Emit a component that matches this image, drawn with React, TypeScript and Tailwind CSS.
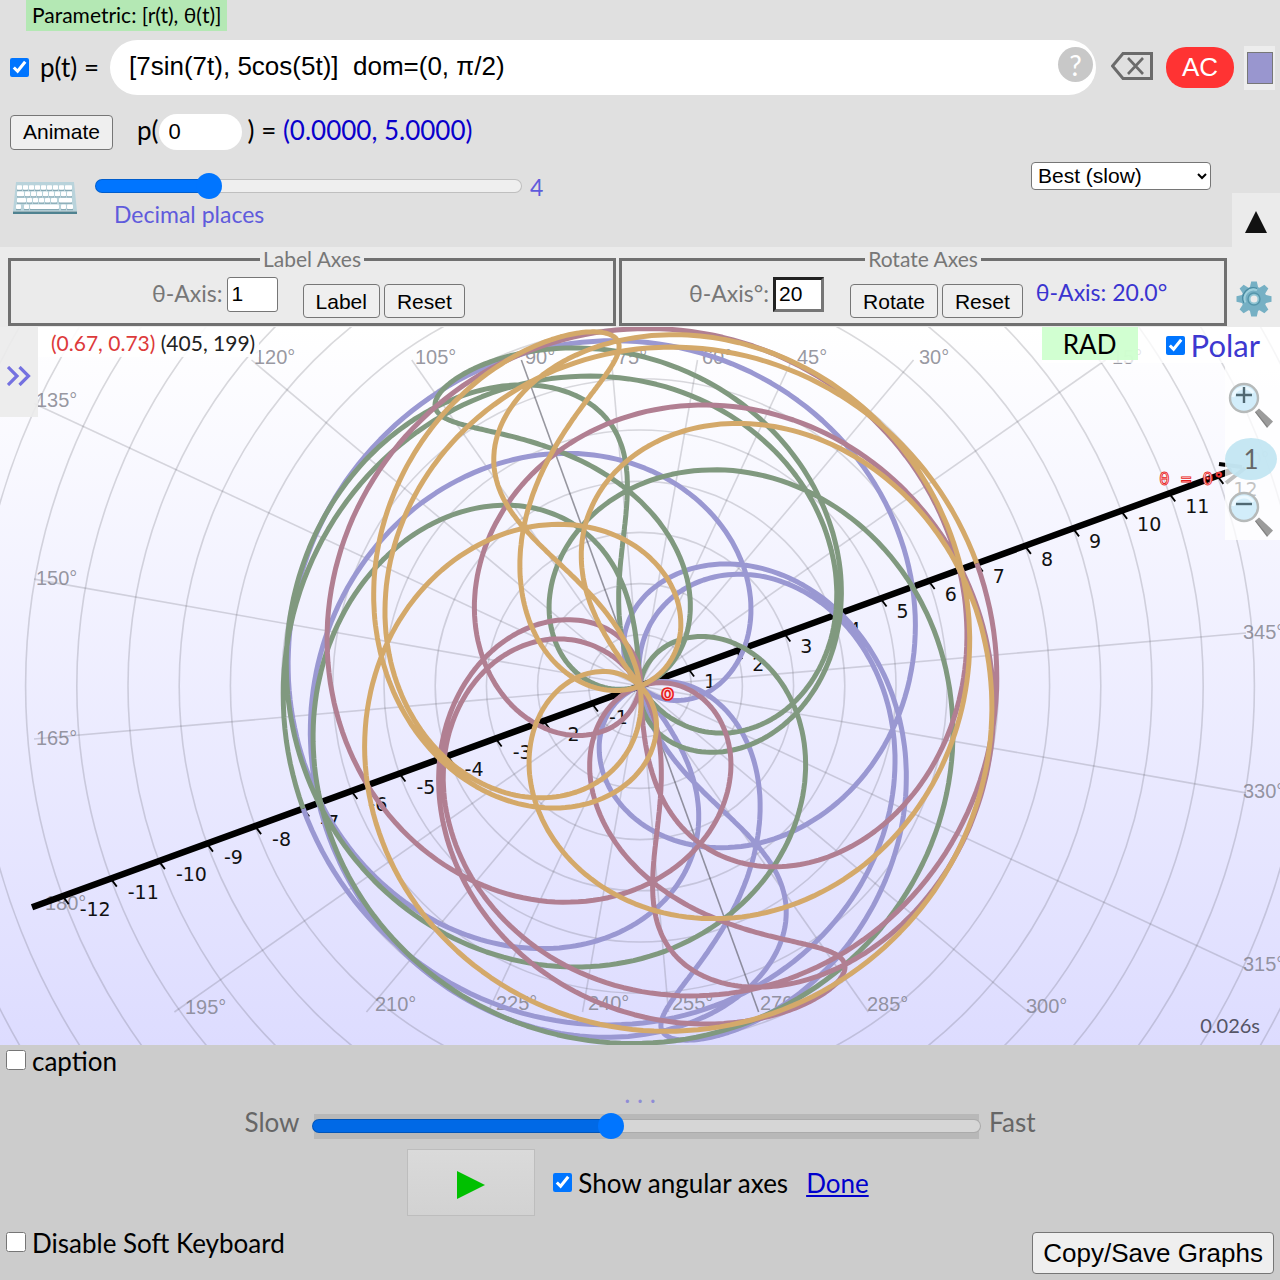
import { useState } from "react";
import type { ReactNode } from "react";
import clsx from "clsx";

const CX = 640;
const CY = 359;
const UNIT = 51.2;
const ROTATION = (20 * Math.PI) / 180;

const CURVES = [
  { color: "#9a98d2", start: 0 },
  { color: "#80997f", start: Math.PI / 2 },
  { color: "#b17f92", start: Math.PI },
  { color: "#d4a96a", start: (3 * Math.PI) / 2 },
];

const RINGS = Array.from({ length: 15 }, (_, i) => i + 1);
const TICKS = Array.from({ length: 25 }, (_, i) => i - 12).filter((n) => n !== 0);

// label text and its left/baseline position on the plot
const ANGLES: [string, number, number][] = [
  ["15°", 1112, 37],
  ["30°", 919, 37],
  ["45°", 797, 37],
  ["60°", 702, 37],
  ["75°", 617, 37],
  ["90°", 525, 37],
  ["105°", 415, 37],
  ["120°", 254, 37],
  ["135°", 36, 80],
  ["150°", 36, 258],
  ["165°", 36, 418],
  ["180°", 45, 583],
  ["195°", 185, 687],
  ["210°", 375, 684],
  ["225°", 496, 683],
  ["240°", 588, 683],
  ["255°", 672, 683],
  ["270°", 760, 683],
  ["285°", 867, 684],
  ["300°", 1026, 686],
  ["315°", 1243, 644],
  ["330°", 1243, 471],
  ["345°", 1243, 312],
  ["0°", 1250, 139],
];

function curvePath(start: number) {
  const steps = 1200;
  let d = "";
  for (let i = 0; i <= steps; i++) {
    const t = start + (i / steps) * (Math.PI / 2);
    const r = 7 * Math.sin(7 * t) * UNIT;
    const a = 5 * Math.cos(5 * t) + ROTATION;
    const x = CX + r * Math.cos(a);
    const y = CY - r * Math.sin(a);
    d += `${i ? "L" : "M"}${x.toFixed(1)} ${y.toFixed(1)}`;
  }
  return d;
}

// end of a ray, clipped to the labelled area
function rayEnd(deg: number) {
  const a = (deg * Math.PI) / 180 + ROTATION;
  const dx = Math.cos(a);
  const dy = -Math.sin(a);
  const t = Math.min(606 / Math.abs(dx), 326 / Math.abs(dy));
  return { x: CX + dx * t, y: CY + dy * t };
}

function Plot() {
  const cos = Math.cos(ROTATION);
  const sin = Math.sin(ROTATION);
  return (
    <svg viewBox="0 0 1280 718" className="block w-full" role="img" aria-label="Polar graph">
      <defs>
        <linearGradient id="sky" x1="0" y1="0" x2="0" y2="1">
          <stop offset="0" stopColor="#ffffff" />
          <stop offset="1" stopColor="#dddcff" />
        </linearGradient>
      </defs>
      <rect width="1280" height="718" fill="url(#sky)" />
      <g fill="none" stroke="#55555f" strokeOpacity="0.22" strokeWidth="1.6">
        {RINGS.map((n) => (
          <circle key={n} cx={CX} cy={CY} r={n * UNIT} />
        ))}
        {Array.from({ length: 24 }, (_, i) => i * 15)
          .filter((deg) => deg % 180 !== 0)
          .map((deg) => {
            const end = rayEnd(deg);
            return (
              <line
                key={deg}
                x1={CX}
                y1={CY}
                x2={end.x}
                y2={end.y}
                strokeOpacity={deg % 90 === 0 ? 0.6 : 0.22}
              />
            );
          })}
      </g>
      <g fill="#7d7d88" fillOpacity="0.8" fontSize="20" className="font-['Liberation_Sans',sans-serif]">
        {ANGLES.map(([text, x, y]) => (
          <text key={text} x={x} y={y}>
            {text}
          </text>
        ))}
      </g>
      <g stroke="#000">
        <line x1={CX - 647 * cos} y1={CY + 647 * sin} x2={CX + 630 * cos} y2={CY - 630 * sin} strokeWidth="6.5" />
        <path d="M1219 137L1242 140M1226 156L1245 141" strokeWidth="4" fill="none" />
        {TICKS.map((n) => {
          const x = CX + n * UNIT * cos;
          const y = CY - n * UNIT * sin;
          return <line key={n} x1={x} y1={y} x2={x + 6} y2={y + 8} strokeWidth="1.8" />;
        })}
      </g>
      <g fontSize="19" fill="#111" className="font-['DejaVu_Sans',sans-serif]">
        {TICKS.map((n) => (
          <text key={n} x={CX + n * UNIT * cos + (n < 0 ? 17 : 16)} y={CY - n * UNIT * sin + 20}>
            {n}
          </text>
        ))}
      </g>
      <g fill="none" strokeWidth="5" strokeLinejoin="round">
        {CURVES.map((c) => (
          <path key={c.color} d={curvePath(c.start)} stroke={c.color} />
        ))}
      </g>
      <g
        fill="#ffd0d0"
        stroke="#e81c1c"
        strokeWidth="0.8"
        fontSize="18"
        className="font-['DejaVu_Sans_Mono',monospace]"
      >
        <text x="1159" y="158">
          θ = 0°
        </text>
        <text x="661" y="373" fontSize="22" strokeWidth="1.6" fontWeight="700">
          o
        </text>
      </g>
    </svg>
  );
}

// x and width of every key, row by row
const KEYS: [number, number][][] = [
  [[4, 5], [10, 5], [16, 5], [22, 5], [28, 5], [34, 5], [40, 5], [46, 5], [52, 7]],
  [[4, 7], [12, 5], [18, 5], [24, 5], [30, 5], [36, 5], [42, 5], [48, 5], [54, 5]],
  [[4, 9], [14, 5], [20, 5], [26, 5], [32, 5], [38, 6], [46, 13]],
  [[3, 5], [11, 5], [17, 29], [48, 5], [54, 6]],
];

function KeyboardIcon() {
  return (
    <svg viewBox="0 0 64 32" className="h-8 w-16">
      <path d="M3 0h58l3 29H0z" fill="#b9d3db" />
      <path d="M0 29.500h64v2.500H0z" fill="#4f8290" />
      {KEYS.map((row, i) =>
        row.map(([x, w]) => (
          <g key={`${i}-${x}`}>
            <rect x={x} y={4 + i * 6.4} width={w} height="5" fill="#86a9b4" />
            <rect x={x} y={3.2 + i * 6.4} width={w} height="4.6" rx="0.8" fill="#fff" />
          </g>
        ))
      )}
    </svg>
  );
}

function GearIcon() {
  return (
    <svg viewBox="-18 -18 36 36" className="size-9">
      <g fill="#76b0c4">
        {[0, 45, 90, 135, 180, 225, 270, 315].map((deg) => (
          <path key={deg} d="M-4.500 -10L-2.800 -17.500H2.800L4.500 -10z" transform={`rotate(${deg})`} />
        ))}
        <circle r="12.500" />
      </g>
      <path d="M-10 4A10.500 10.500 0 0 1 3 -10.500" fill="none" stroke="#4a8ba2" strokeWidth="1.500" />
      <path d="M-8.500 3.500A9 9 0 0 1 3 -8.800" fill="none" stroke="#9fd0dd" strokeWidth="2" />
      <circle r="6" fill="#8fc4d3" stroke="#5596ab" strokeWidth="1.500" />
      <circle r="3.500" fill="#ebebeb" />
    </svg>
  );
}

function ZoomIcon({ plus }: { plus?: boolean }) {
  return (
    <svg viewBox="0 0 48 48" className="size-12">
      <path d="M30 31L34 27.500L48 40.500L42 47z" fill="#9b9b9b" />
      <path d="M30.500 31L42.500 46" stroke="#808080" strokeWidth="1.200" />
      <circle cx="19" cy="17" r="14" fill="#d2edfa" stroke="#b6baba" strokeWidth="2.400" />
      <path d="M8 16a11 11 0 0 1 20 -4" fill="none" stroke="#edf9ff" strokeWidth="3" />
      <path d={plus ? "M11 14H27M19 6V22" : "M11 14H27"} stroke="#4f6872" strokeWidth="2.400" />
    </svg>
  );
}

function BackspaceIcon() {
  return (
    <svg viewBox="0 0 42 28" className="h-7 w-[42px]" fill="none" stroke="#6b6b6b">
      <path d="M12 1.500H40.500V26.500H12L1.500 14z" strokeWidth="3" />
      <path d="M17 6L32 22M32 6L17 22" strokeWidth="2.600" />
    </svg>
  );
}

type SliderProps = {
  label: string;
  max: number;
  value: number;
  onChange: (value: number) => void;
  fill: string;
  rest: string;
  className?: string;
};

function Slider({ label, max, value, onChange, fill, rest, className }: SliderProps) {
  const stop = `calc(12px + (100% - 24px) * ${value / max})`;
  return (
    <input
      type="range"
      aria-label={label}
      min={0}
      max={max}
      value={value}
      onChange={(e) => onChange(Number(e.target.value))}
      style={{ background: `linear-gradient(to right, ${fill} ${stop}, ${rest} ${stop}) border-box` }}
      className={clsx(
        "block h-[14px] appearance-none rounded-full border border-black/20",
        "[&::-webkit-slider-thumb]:size-[26px] [&::-webkit-slider-thumb]:appearance-none [&::-webkit-slider-thumb]:rounded-full [&::-webkit-slider-thumb]:bg-[#0075ff]",
        className
      )}
    />
  );
}

function Button({ children, className }: { children: ReactNode; className?: string }) {
  return (
    <button
      className={clsx(
        "rounded-[4px] border border-[#767676] bg-[#efefef] font-['Liberation_Sans',sans-serif] text-black",
        className ?? "h-[34px] px-3 text-[21px] leading-none"
      )}
    >
      {children}
    </button>
  );
}

function Header() {
  const [places, setPlaces] = useState(4);
  return (
    <header className="flex h-[247px] flex-col bg-[#e0e0e0]">
      <div className="ml-[26px] h-[31px] self-start bg-[#b4e8b4] px-[6px] text-[21px] leading-[30px]">
        Parametric: [r(t), θ(t)]
      </div>
      <div className="mt-[9px] flex h-[55px] items-center pr-[5px] pl-[10px]">
        <label className="flex items-center gap-[11px] text-[26px]">
          <input type="checkbox" defaultChecked className="size-[19px]" />
          p(t) =
        </label>
        <div className="relative ml-[11px] h-full flex-1">
          <input
            aria-label="Function"
            defaultValue="[7sin(7t), 5cos(5t)]  dom=(0, π/2)"
            className="size-full rounded-full bg-white pr-12 pb-[2px] pl-[19px] font-['Liberation_Sans',sans-serif] text-[26px]"
          />
          <button
            aria-label="Help"
            className="absolute top-[7px] right-[3px] size-[35px] rounded-full bg-[#c8c8c8] text-[28px] leading-none text-white"
          >
            ?
          </button>
        </div>
        <button aria-label="Delete" className="ml-[15px] pb-1">
          <BackspaceIcon />
        </button>
        <button className="ml-[13px] h-[41px] w-[68px] rounded-[20px] bg-[#ff3333] pb-[2px] font-['Liberation_Sans',sans-serif] text-[26px] leading-none text-white">
          AC
        </button>
        <button aria-label="Graph color" className="ml-[10px] flex h-11 w-[31px] items-center justify-center bg-[#ededed]">
          <span className="h-8 w-[26px] border border-[#777] bg-[#9996cf]" />
        </button>
      </div>
      <div className="mt-[19px] flex h-9 items-center pl-[10px] text-[26px]">
        <Button className="h-[35px] px-3 pb-[2px] text-[21px] leading-none">Animate</Button>
        <label htmlFor="arg" className="-mt-1 ml-6">
          p(
        </label>
        <input
          id="arg"
          defaultValue="0"
          className="h-9 w-[83px] rounded-full bg-white pl-[10px] font-['Liberation_Sans',sans-serif] text-[22px]"
        />
        <span className="-mt-1 ml-[6px]">
          ) = <output className="text-[#0a00cc]">(0.0000, 5.0000)</output>
        </span>
      </div>
      <div className="mt-[12px] flex items-start pr-[69px] pl-[13px]">
        <button aria-label="Keyboard" className="mt-5">
          <KeyboardIcon />
        </button>
        <div className="ml-[18px] w-[427px]">
          <div className="flex h-12 items-center">
            <Slider label="Decimal places" max={16} value={places} onChange={setPlaces} fill="#0075ff" rest="#efefef" className="w-full" />
          </div>
          <p className="-mt-[10px] pl-[19px] text-[23px] leading-7 text-[#5f5bdc]">Decimal places</p>
        </div>
        <output className="ml-2 text-[23px] leading-[50px] text-[#5f5bdc]">{places}</output>
        <select
          aria-label="Quality"
          className="ml-auto h-7 w-[180px] rounded-[4px] border border-[#767676] bg-white pb-[2px] pl-[2px] font-['Liberation_Sans',sans-serif] text-[21px] leading-none"
        >
          <option>Best (slow)</option>
          <option>Fast</option>
        </select>
      </div>
    </header>
  );
}

function AxesBar() {
  return (
    <div className="flex h-20 gap-[3px] bg-[#ebebeb] pr-[53px] pl-2 text-[#777]">
      <fieldset className="h-[79px] min-w-0 flex-1 border-[3px] border-[#707070]">
        <legend className="mx-auto px-[3px] text-[21px] leading-6">Label Axes</legend>
        <div className="flex pl-[141px]">
          <label htmlFor="label-axis" className="mr-1 text-[23px] leading-[44px]">
            θ-Axis:
          </label>
          <input
            id="label-axis"
            defaultValue="1"
            className="mt-[6px] h-[35px] w-[51px] rounded-[3px] border border-[#767676] bg-white pb-[2px] pl-1 font-['Liberation_Sans',sans-serif] text-[21px] text-black"
          />
          <div className="mt-[13px] ml-[25px] flex gap-1">
            <Button>Label</Button>
            <Button>Reset</Button>
          </div>
        </div>
      </fieldset>
      <fieldset className="h-[79px] min-w-0 flex-1 border-[3px] border-[#707070]">
        <legend className="mx-auto px-[3px] text-[21px] leading-6">Rotate Axes</legend>
        <div className="flex pl-[67px]">
          <label htmlFor="rotate-axis" className="mr-1 text-[23px] leading-[44px]">
            θ-Axis°:
          </label>
          <input
            id="rotate-axis"
            defaultValue="20"
            className="mt-[6px] h-[35px] w-[51px] border-[3px] border-t-[#222] border-r-[#767676] border-b-[#767676] border-l-[#222] bg-white pb-[2px] pl-[3px] font-['Liberation_Sans',sans-serif] text-[21px] text-black"
          />
          <div className="mt-[13px] ml-[26px] flex gap-1">
            <Button>Rotate</Button>
            <Button>Reset</Button>
          </div>
          <output className="ml-[13px] text-[23px] leading-[42px] text-[#3a34d0]">θ-Axis: 20.0°</output>
        </div>
      </fieldset>
    </div>
  );
}

function Graph() {
  return (
    <section className="relative">
      <Plot />
      <button
        aria-label="Open side panel"
        className="absolute top-0 left-0 flex h-[90px] w-[38px] items-center justify-center bg-[#ebebeb]/90"
      >
        <svg viewBox="0 0 24 20" className="mt-2 h-5 w-6" fill="none" stroke="#7471e0" strokeWidth="3.200">
          <path d="M1 1L10 10L1 19M12.500 1L21.500 10L12.500 19" />
        </svg>
      </button>
      <p className="absolute top-0 left-[38px] h-[30px] bg-white/90 pr-1 pl-[13px] text-[21px] leading-8 text-[#222]">
        <span className="text-[#dd3a3a]">(0.67, 0.73)</span> (405, 199)
      </p>
      <div className="absolute top-0 right-0 flex h-9 items-start bg-white/75">
        <button className="h-[33px] w-24 bg-[#ccffcc]/90 text-[26px] leading-8">RAD</button>
        <label className="ml-7 flex items-center gap-[6px] pr-5 text-[31px] leading-9 text-[#3d38d0]">
          <input type="checkbox" defaultChecked className="size-[19px]" />
          Polar
        </label>
      </div>
      <div className="absolute top-9 right-0 h-[177px] w-[55px] bg-white/75">
        <button aria-label="Zoom in" className="absolute top-[18px] left-0">
          <ZoomIcon plus />
        </button>
        <button className="absolute top-[75px] left-0 h-[42px] w-[52px] rounded-[50%] bg-[#c0e4f2]/90 text-[26px] leading-none text-[#666]">
          1
        </button>
        <button aria-label="Zoom out" className="absolute top-[127px] left-0">
          <ZoomIcon />
        </button>
      </div>
      <p className="absolute right-5 bottom-2 text-xl leading-6 text-[#555566]">0.026s</p>
    </section>
  );
}

function Footer() {
  const [speed, setSpeed] = useState(80);
  return (
    <footer className="flex flex-1 flex-col bg-[#cccccc] text-[26px] leading-8">
      <label className="flex gap-[6px] self-start pl-[6px]">
        <input type="checkbox" className="mt-[5px] size-5" />
        caption
      </label>
      <div className="mt-1 text-center leading-6 text-[#8f8cd6]">. . .</div>
      <div className="mt-[5px] flex h-8 items-center justify-center gap-[14px] text-[#666]">
        <span className="-mt-2">Slow</span>
        <div className="flex h-[25px] w-[52%] items-center bg-[#b8b8b8]">
          <Slider label="Speed" max={180} value={speed} onChange={setSpeed} fill="#0069e6" rest="#d6d6d6" className="-mx-[2px] w-full flex-1" />
        </div>
        <span className="-mt-2 -ml-1">Fast</span>
      </div>
      <div className="mt-[7px] flex h-[67px] items-center justify-center">
        <button
          aria-label="Play"
          className="flex h-full w-32 items-center justify-center border border-[#bdbdbd] bg-linear-to-b from-[#dadada] to-[#d2d2d2]"
        >
          <svg viewBox="0 0 28 28" className="mt-1 size-7">
            <path d="M0 0L28 14L0 28z" fill="#00c000" />
          </svg>
        </button>
        <label className="ml-[18px] flex items-center gap-[6px]">
          <input type="checkbox" defaultChecked className="size-[19px]" />
          Show angular axes
        </label>
        <a href="#" className="mr-1 ml-[18px] text-[#0000cc] underline">
          Done
        </a>
      </div>
      <div className="mt-auto flex items-start justify-between pr-[6px] pb-[6px] pl-[6px]">
        <label className="flex items-start gap-[6px]">
          <input type="checkbox" className="size-5" />
          <span className="-mt-[5px]">Disable Soft Keyboard</span>
        </label>
        <Button className="h-[42px] px-[10px] text-[26px] leading-none">Copy/Save Graphs</Button>
      </div>
    </footer>
  );
}

export default function App() {
  return (
    <div className="flex min-h-screen flex-col font-[Lato,sans-serif] text-black">
      <div className="relative">
        <Header />
        <AxesBar />
        <div className="absolute right-0 bottom-0 flex h-[134px] w-12 flex-col items-center justify-between bg-[#ebebeb] pt-[18px] pb-[10px]">
          <button aria-label="Collapse">
            <svg viewBox="0 0 22 22" className="size-[22px]">
              <path d="M11 0L22 22H0z" fill="#111" />
            </svg>
          </button>
          <button aria-label="Settings" className="mr-1">
            <GearIcon />
          </button>
        </div>
      </div>
      <Graph />
      <Footer />
    </div>
  );
}
